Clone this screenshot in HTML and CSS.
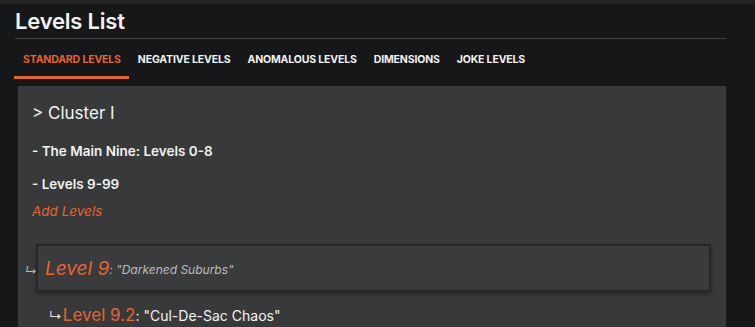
FILE: index.html
```html
<!DOCTYPE html>
<html lang="en">
<head>
    <meta charset="UTF-8">
    <meta name="viewport" content="width=device-width, initial-scale=1.0">
    <title>Levels List</title>
    <link rel="stylesheet" href="styles.css">
</head>
<body>
    <div class="top-strip"></div>
    <div class="page">
        <header>
            <h1>Levels List</h1>
        </header>
        <!-- Tabs -->
        <nav class="tabs">
            <a href="#" class="tab active">Standard Levels</a>
            <a href="#" class="tab">Negative Levels</a>
            <a href="#" class="tab">Anomalous Levels</a>
            <a href="#" class="tab">Dimensions</a>
            <a href="#" class="tab">Joke Levels</a>
        </nav>
        <!-- Tab content -->
        <main class="panel">
            <h2 class="cluster">&gt; Cluster I</h2>
            <p class="group">- The Main Nine: Levels 0-8</p>
            <p class="group">- Levels 9-99</p>
            <a href="#" class="add-link">Add Levels</a>

            <div class="level-row">
                <span class="branch">↳</span>
                <div class="level-box">
                    <span class="level-name big">Level 9</span><span class="level-title">: "Darkened Suburbs"</span>
                </div>
            </div>
            <div class="sub-level">
                <span class="branch-sub">↳</span>
                <span class="level-name">Level 9.2</span><span class="sub-title">: "Cul-De-Sac Chaos"</span>
            </div>
        </main>
    </div>
</body>
</html>
```

FILE: styles.css
```css
/* Page */
body {
    margin: 0;
    background-color: #161718;
    color: #f2f2f2;
    font-family: Inter, "Open Sans", sans-serif;
    overflow: hidden;
}

.top-strip {
    height: 4px;
    background-color: #232323;
}

.page {
    padding: 0 29px 0 15px;
}

/* Title */
header h1 {
    margin: 0;
    padding-top: 3px;
    font-size: 22px;
    font-weight: 600;
    line-height: 28px;
    padding-bottom: 3px;
    border-bottom: 1px solid #3e3e40;
    letter-spacing: -0.2px;
}

/* Tabs */
.tabs {
    display: flex;
    margin-left: -1px;
}

.tab {
    display: block;
    padding: 14px 8px 10px 9px;
    font-size: 10.5px;
    font-weight: 700;
    text-transform: uppercase;
    color: #f2f2f2;
    text-decoration: none;
    border-bottom: 3px solid transparent;
    letter-spacing: -0.15px;
}

.tab.active {
    color: #e8632b;
    border-bottom-color: #e8632b;
}

/* Panel */
.panel {
    box-sizing: border-box;
    margin: 7px 0 0 3px;
    padding: 16px 15px 0 14px;
    background-color: #38393b;
    height: 242px;
    overflow: hidden;
}

.cluster {
    margin: 0 0 18px;
    font-size: 17px;
    font-weight: 400;
    line-height: 22px;
}

.group {
    margin: 0 0 14px;
    font-size: 13.5px;
    font-weight: 600;
    line-height: 19px;
}

.add-link {
    display: block;
    font-size: 13.5px;
    font-style: italic;
    color: #e8632b;
    text-decoration: none;
    line-height: 18px;
    margin-top: -6px;
}

/* Level boxes */
.level-row {
    display: flex;
    align-items: center;
    margin: 24px 0 0 -7px;
}

.branch {
    width: 11px;
    font-size: 12px;
    color: #bdbdbd;
    padding-top: 5px;
    font-style: italic;
}

.level-box {
    flex-grow: 1;
    height: 44px;
    display: flex;
    align-items: center;
    padding-left: 7px;
    background-color: #3a3b3d;
    border: 2px solid #262729;
    box-shadow: 0 2px 4px rgba(0, 0, 0, 0.35);
}

.level-name {
    color: #e8632b;
    font-size: 17px;
}

.level-name.big {
    font-size: 19px;
    font-style: italic;
}

.level-title {
    font-size: 12px;
    font-style: italic;
    color: #bcbcbc;
    padding-top: 3px;
}

.sub-level {
    margin: 13px 0 0 17px;
    display: flex;
    align-items: baseline;
}

.branch-sub {
    font-size: 13px;
    margin-right: 1px;
    color: #e0e0e0;
}

.sub-title {
    font-size: 14px;
    color: #f2f2f2;
}
```
